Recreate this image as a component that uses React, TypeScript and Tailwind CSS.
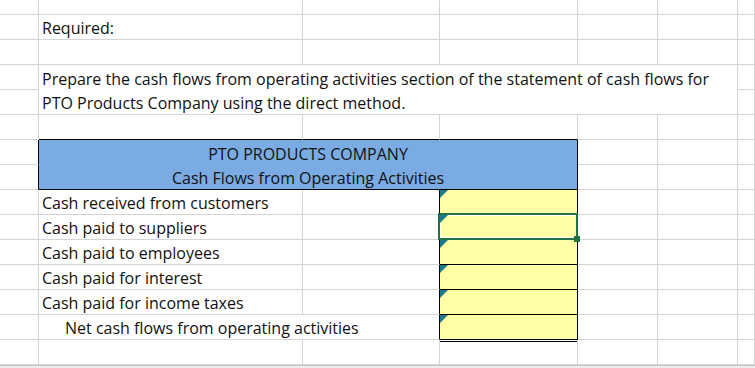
import React from "react";

const G = "border-r border-b border-[#d4d4d4]";

function Tri() {
  return (
    <svg className="absolute left-0 top-0 z-30" width="8" height="8" viewBox="0 0 8 8">
      <polygon points="0,0 8,0 0,8" fill="#1f7a8c" />
    </svg>
  );
}

function Row({ children }: { children?: React.ReactNode }) {
  return <>{children}</>;
}

const labels = [
  "Cash received from customers",
  "Cash paid to suppliers",
  "Cash paid to employees",
  "Cash paid for interest",
  "Cash paid for income taxes",
];

export default function App() {
  return (
    <div
      className="w-[755px] h-[368px] overflow-hidden bg-white text-[16px] leading-[20px] text-[#111]"
      style={{ fontFamily: "'Open Sans', 'Noto Sans', 'Liberation Sans', sans-serif" }}
    >
      <div className="grid grid-cols-[39px_264px_137px_138px_80px_80px_1fr] grid-rows-[15px_repeat(14,25px)_3px]">
        {/* r0 */}
        <div className={G} />
        <div className={G} />
        <div className={G} />
        <div className={G} />
        <div className={G} />
        <div className={G} />
        <div className={G} />
        {/* r1 */}
        <div className={G} />
        <div className={`${G} flex items-end pl-[3px] pb-[1px] whitespace-nowrap`}>Required:</div>
        <div className={G} />
        <div className={G} />
        <div className={G} />
        <div className={G} />
        <div className={G} />
        {/* r2 */}
        <div className={G} />
        <div className={G} />
        <div className={G} />
        <div className={G} />
        <div className={G} />
        <div className={G} />
        <div className={G} />
        {/* r3-r4 */}
        <div className={G} />
        <div className={`${G} col-span-5 row-span-2 flex flex-col pl-[3px] whitespace-nowrap`}>
          <div className="h-[25px] flex items-end pb-[1px]">
            Prepare the cash flows from operating activities section of the statement of cash flows for
          </div>
          <div className="h-[24px] flex items-end pb-[1px]">PTO Products Company using the direct method.</div>
        </div>
        <div className={G} />
        <div className={G} />
        <div className={G} />
        {/* r5 */}
        <div className={G} />
        <div className="border-r border-[#d4d4d4] border-b border-b-black" />
        <div className="border-r border-[#d4d4d4] border-b border-b-black" />
        <div className="border-r border-[#d4d4d4] border-b border-b-black" />
        <div className={G} />
        <div className={G} />
        <div className={G} />
        {/* r6-r7 */}
        <div className="border-b border-[#d4d4d4] border-r border-r-black" />
        <div className="col-span-3 row-span-2 bg-[#7aace3] border-r border-b border-black flex flex-col items-center whitespace-nowrap">
          <div className="h-[25px] flex items-end pb-[1px]">PTO PRODUCTS COMPANY</div>
          <div className="h-[24px] flex items-end pb-[1px]">Cash Flows from Operating Activities</div>
        </div>
        <div className={G} />
        <div className={G} />
        <div className={G} />
        <div className="border-b border-[#d4d4d4] border-r border-r-black" />
        <div className={G} />
        <div className={G} />
        <div className={G} />
        {/* r8-r13 */}
        {[...labels, "Net cash flows from operating activities"].map((l, i) => {
          const last = i === 5;
          return (
            <Row key={l}>
              <div className={G} />
              <div
                className={
                  last
                    ? "border-b border-[#d4d4d4] flex items-end pl-[26px] pb-[1px] whitespace-nowrap overflow-visible relative z-10"
                    : `${G} flex items-end pl-[3px] pb-[1px] whitespace-nowrap`
                }
              >
                {l}
              </div>
              <div className="border-b border-[#d4d4d4] border-r border-r-black" />
              <div className="relative bg-[#ffffa6] border-r border-b border-black">
                {i === 1 && (
                  <>
                    <div className="absolute -top-[2px] -left-[2px] -right-[1px] -bottom-[1px] border-2 border-[#217346] z-10">
                      <div className="absolute inset-0 border border-white border-r-0" />
                    </div>
                    <div className="absolute -right-[3px] -bottom-[3px] w-[6px] h-[6px] bg-[#217346] z-20" />
                  </>
                )}
                <Tri />
              </div>
              <div className={G} />
              <div className={G} />
              <div className={G} />
            </Row>
          );
        })}
        {/* r14 */}
        <div className={G} />
        <div className={G} />
        <div className={G} />
        <div className={`${G} shadow-[inset_0_1px_0_#fff,inset_0_2px_0_#000]`} />
        <div className={G} />
        <div className={G} />
        <div className={G} />
        {/* bottom strip */}
        <div className="col-span-7 border-t border-[#c8c8c8] bg-[#ececec]" />
      </div>
    </div>
  );
}
